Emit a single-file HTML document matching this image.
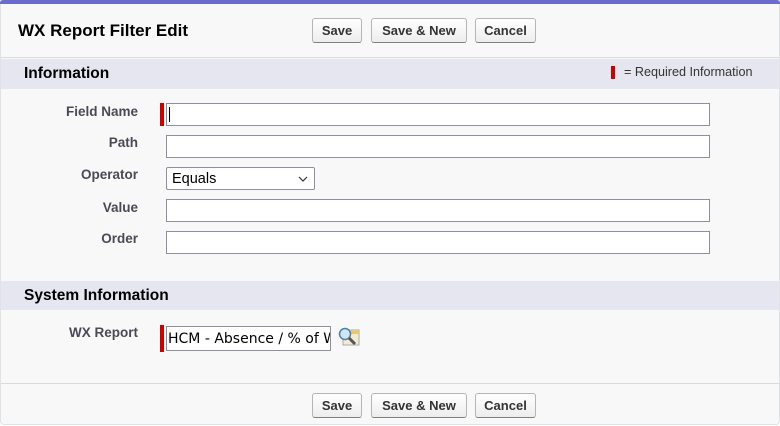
<!DOCTYPE html><html><head><style>
body{margin:0;width:780px;height:426px;background:#fff;font-family:"Liberation Sans",Arial,sans-serif;overflow:hidden}
.pg{position:absolute;left:0;top:0;width:778px;height:424px;background:#f8f8f8;border:1px solid #e0e3e5;border-top:none;border-radius:0 0 4px 4px}
.top{position:absolute;left:0;top:0;width:780px;height:4px;background:#6b6bcb;border-radius:3px 3px 0 0}
.a{position:absolute}
.t{left:18px;top:21px;font-size:17px;font-weight:bold;color:#000}
.btn{position:absolute;border:1px solid #b5b5b5;border-bottom-color:#7f7f7f;border-radius:3px;background:linear-gradient(#fff,#ededed);font-size:13px;font-weight:bold;color:#333;text-align:center;line-height:23px;box-sizing:border-box;height:25px}
.hr{position:absolute;left:1px;width:778px;height:1px;background:#dbdbdb}
.sec{position:absolute;left:1px;width:778px;background:#e6e6f0;font-size:15.5px;font-weight:bold;color:#000;box-sizing:border-box;padding-left:23px}
.lab{position:absolute;right:642px;font-size:13.5px;font-weight:bold;color:#4a4a56;text-align:right}
.in{position:absolute;background:#fff;border:1px solid #8f8f9d;box-sizing:border-box;height:23px}
.req{position:absolute;width:4px;background:#c00}
</style></head><body>
<div class="pg"></div><div class="top"></div>
<div class="a t">WX Report Filter Edit</div>
<div class="btn" style="left:312px;top:18px;width:50px">Save</div>
<div class="btn" style="left:371px;top:18px;width:96px">Save &amp; New</div>
<div class="btn" style="left:475px;top:18px;width:61px">Cancel</div>
<div class="hr" style="top:57px"></div>
<div class="sec" style="top:59px;height:30px;line-height:30px">Information</div>
<div class="req" style="left:611px;top:66px;height:13px;width:4px"></div>
<div class="a" style="left:624px;top:65px;font-size:12.6px;color:#333">= Required Information</div>
<div class="lab" style="top:104px">Field Name</div>
<div class="req" style="left:160px;top:103px;height:23px"></div>
<div class="in" style="left:166px;top:103px;width:544px"><div style="position:absolute;left:2px;top:3px;width:1px;height:15px;background:#000"></div></div>
<div class="lab" style="top:135px">Path</div>
<div class="in" style="left:166px;top:135px;width:544px"></div>
<div class="lab" style="top:167px">Operator</div>
<div class="in" style="left:166px;top:167px;width:149px;border-radius:2px;font-size:14.5px;line-height:23px;padding-left:5px;color:#000">Equals<svg style="position:absolute;right:6px;top:8px" width="10" height="6"><path d="M1 1l4 4 4-4" fill="none" stroke="#333" stroke-width="1.2"/></svg></div>
<div class="lab" style="top:200px">Value</div>
<div class="in" style="left:166px;top:199px;width:544px"></div>
<div class="lab" style="top:231px">Order</div>
<div class="in" style="left:166px;top:231px;width:544px"></div>
<div class="sec" style="top:281px;height:29px;line-height:29px">System Information</div>
<div class="lab" style="top:325px">WX Report</div>
<div class="req" style="left:160px;top:325px;height:27px"></div>
<div class="in" style="left:166px;top:326px;width:165px;height:25px;font-family:'DejaVu Sans',sans-serif;font-size:14px;line-height:24px;padding-left:1px;overflow:hidden;white-space:nowrap;color:#000">HCM - Absence / % of Wo</div>
<svg class="a" style="left:337px;top:326px" width="23" height="20"><rect x="6" y="4" width="16" height="15" fill="#f3ebd0" stroke="#aaa"/><rect x="7" y="5" width="14" height="3" fill="#f2c94c"/><circle cx="8" cy="8" r="5.5" fill="#cfe6f7" stroke="#4f7ea8" stroke-width="1.5"/><path d="M12 12l6 6" stroke="#555" stroke-width="3"/></svg>
<div class="hr" style="top:383px"></div>
<div class="btn" style="left:312px;top:393px;width:50px">Save</div>
<div class="btn" style="left:371px;top:393px;width:96px">Save &amp; New</div>
<div class="btn" style="left:475px;top:393px;width:61px">Cancel</div>
</body></html>
